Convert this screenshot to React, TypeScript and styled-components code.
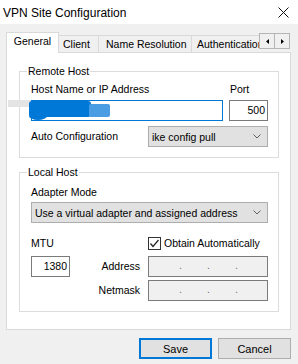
import React from 'react'
import styled, { createGlobalStyle } from 'styled-components'

const GlobalStyle = createGlobalStyle`
  * { box-sizing: border-box; }
  html, body { margin: 0; padding: 0; background: #f0f0f0; }
  body { font-family: 'Liberation Sans', Arial, sans-serif; font-size: 10.5px; color: #000; }
`

const tabs = ['General', 'Client', 'Name Resolution', 'Authentication']
const tabWidths = [53, 40, 93, 90]

const Chevron = () => (
  <svg width="8" height="5" viewBox="0 0 8 5">
    <polyline points="0.5,0.5 4,4 7.5,0.5" fill="none" stroke="#606060" strokeWidth="1" />
  </svg>
)

const App: React.FC = () => {
  return (
    <Window>
      <GlobalStyle />
      <TitleBar>
        <Title>VPN Site Configuration</Title>
        <svg width="11" height="11" viewBox="0 0 11 11">
          <path d="M0.5 0.5 L10.5 10.5 M10.5 0.5 L0.5 10.5" stroke="#111" strokeWidth="1" />
        </svg>
      </TitleBar>
      <Body>
        <TabStrip>
          <TabList>
            {tabs.map((t, i) => (
              <Tab key={t} $active={i === 0} $width={tabWidths[i]}>
                {t}
              </Tab>
            ))}
          </TabList>
          <Arrows>
            <ArrowBtn>
              <svg width="3" height="5" viewBox="0 0 3 5">
                <polygon points="3,0 3,5 0,2.5" fill="#000" />
              </svg>
            </ArrowBtn>
            <ArrowBtn>
              <svg width="3" height="5" viewBox="0 0 3 5">
                <polygon points="0,0 0,5 3,2.5" fill="#000" />
              </svg>
            </ArrowBtn>
          </Arrows>
        </TabStrip>
        <Panel>
          <Group $pt={11}>
            <Legend>Remote Host</Legend>
            <HostRow>
              <Column>
                <Label>Host Name or IP Address</Label>
                <TextBox $focused />
              </Column>
              <Column $width={39}>
                <Label $indent={1}>Port</Label>
                <TextBox>500</TextBox>
              </Column>
            </HostRow>
            <ConfigRow>
              <Label>Auto Configuration</Label>
              <Combo $width={120}>
                <span>ike config pull</span>
                <Chevron />
              </Combo>
            </ConfigRow>
            <Redaction width="104" height="21" viewBox="0 0 104 21">
              <rect x="0" y="0" width="23" height="7" fill="#e4e4e4" />
              <rect x="21" y="1" width="62" height="16" rx="3" fill="#0078d7" />
              <ellipse cx="30" cy="16" rx="9" ry="4" fill="#0078d7" />
              <rect x="81" y="4" width="21" height="13" rx="2" fill="#4a9de2" />
            </Redaction>
          </Group>
          <Group $pt={13}>
            <Legend>Local Host</Legend>
            <Label>Adapter Mode</Label>
            <Combo $top={3}>
              <span>Use a virtual adapter and assigned address</span>
              <Chevron />
            </Combo>
            <AddrGrid>
              <Label>MTU</Label>
              <span />
              <CheckRow>
                <CheckBox>
                  <svg width="11" height="11" viewBox="0 0 11 11">
                    <polyline points="1.5,5.5 4,8.5 9.5,2" fill="none" stroke="#222" strokeWidth="1.2" />
                  </svg>
                </CheckBox>
                <span>Obtain Automatically</span>
              </CheckRow>
              <TextBox>1380</TextBox>
              <FieldLabel>Address</FieldLabel>
              <IpField>
                <Dot>.</Dot>
                <Dot>.</Dot>
                <Dot>.</Dot>
              </IpField>
              <span />
              <FieldLabel>Netmask</FieldLabel>
              <IpField>
                <Dot>.</Dot>
                <Dot>.</Dot>
                <Dot>.</Dot>
              </IpField>
            </AddrGrid>
          </Group>
        </Panel>
        <Footer>
          <Button $primary>Save</Button>
          <Button>Cancel</Button>
        </Footer>
      </Body>
    </Window>
  )
}

export default App

const Window = styled.div`
  width: 298px;
  height: 364px;
  background: #f0f0f0;
  display: flex;
  flex-direction: column;
  overflow: hidden;
`

const TitleBar = styled.div`
  height: 24px;
  background: #fff;
  display: flex;
  align-items: center;
  justify-content: space-between;
  padding: 1px 9px 0 3px;
`

const Title = styled.div`
  font-size: 12px;
  color: #000;
`

const Body = styled.div`
  padding: 8px 7px 0 6px;
  display: flex;
  flex-direction: column;
`

const TabStrip = styled.div`
  display: flex;
  height: 21px;
  margin-bottom: -1px;
  position: relative;
  z-index: 1;
`

const TabList = styled.div`
  width: 253px;
  display: flex;
  align-items: flex-end;
  overflow: hidden;
`

const Tab = styled.div<{ $active?: boolean; $width: number }>`
  flex: 0 0 ${(p) => p.$width}px;
  height: ${(p) => (p.$active ? 21 : 17)}px;
  margin-bottom: ${(p) => (p.$active ? 0 : 1)}px;
  background: ${(p) => (p.$active ? '#fff' : '#f0f0f0')};
  border: 1px solid #d9d9d9;
  border-bottom: none;
  border-left: ${(p) => (p.$active ? '1px solid #d9d9d9' : 'none')};
  padding: ${(p) => (p.$active ? '2px 0 0 0' : '2px 0 0 5px')};
  text-align: ${(p) => (p.$active ? 'center' : 'left')};
  white-space: nowrap;
  line-height: 13px;
  &:nth-child(2) { padding-left: 4px; }
  &:nth-child(3) { padding-left: 7px; }
`

const Arrows = styled.div`
  display: flex;
  margin-top: 1px;
  height: 16px;
`

const ArrowBtn = styled.div`
  width: 16px;
  height: 16px;
  background: #f0f0f0;
  border: 1px solid #b5b5b5;
  & + & { border-left: none; width: 15px; }
  display: flex;
  align-items: center;
  justify-content: center;
`

const Panel = styled.div`
  width: 285px;
  height: 278px;
  background: #fff;
  border: 1px solid #d9d9d9;
  padding: 18px 11px 0 12px;
  display: flex;
  flex-direction: column;
  gap: 14px;
`

const Group = styled.div<{ $pt: number }>`
  position: relative;
  border: 1px solid #dcdcdc;
  padding: ${(p) => p.$pt}px 10px 10px 11px;
  display: flex;
  flex-direction: column;
`

const Legend = styled.span`
  position: absolute;
  top: -7px;
  left: 7px;
  padding: 0 1px;
  background: #fff;
  line-height: 13px;
`

const Label = styled.div<{ $indent?: number }>`
  line-height: 13px;
  white-space: nowrap;
  padding-left: ${(p) => p.$indent || 0}px;
`

const HostRow = styled.div`
  display: flex;
  gap: 6px;
`

const Column = styled.div<{ $width?: number }>`
  display: flex;
  flex-direction: column;
  gap: 4px;
  flex: ${(p) => (p.$width ? `0 0 ${p.$width}px` : '1')};
`

const TextBox = styled.div<{ $focused?: boolean }>`
  height: 21px;
  border: 1px solid ${(p) => (p.$focused ? '#0078d7' : '#7a7a7a')};
  background: #fff;
  text-align: right;
  padding: 3px 2px 0 0;
  line-height: 13px;
`

const ConfigRow = styled.div`
  margin-top: 5px;
  display: flex;
  align-items: center;
  justify-content: space-between;
`

const Combo = styled.div<{ $width?: number; $top?: number }>`
  height: 21px;
  width: ${(p) => (p.$width ? `${p.$width}px` : 'auto')};
  margin-top: ${(p) => p.$top || 0}px;
  background: #e1e1e1;
  border: 1px solid #adadad;
  display: flex;
  align-items: center;
  justify-content: space-between;
  padding: 0 6px 0 3px;
  white-space: nowrap;
`

const Redaction = styled.svg`
  position: absolute;
  left: -12px;
  top: 28px;
`

const AddrGrid = styled.div`
  margin-top: 14px;
  display: grid;
  grid-template-columns: 39px 62px 120px;
  grid-template-rows: 13px 27px 24px;
  column-gap: 8px;
  align-items: start;
  & > :nth-child(n + 4) { margin-top: 6px; }
  & > :nth-child(n + 7) { margin-top: 3px; }
`

const CheckRow = styled.div`
  display: flex;
  align-items: center;
  gap: 3px;
  line-height: 13px;
  white-space: nowrap;
`

const CheckBox = styled.div`
  width: 13px;
  height: 13px;
  border: 1px solid #333;
  background: #fff;
  display: flex;
  align-items: center;
  justify-content: center;
`

const FieldLabel = styled.div`
  height: 21px;
  text-align: right;
  line-height: 21px;
  white-space: nowrap;
`

const IpField = styled.div`
  height: 21px;
  border: 1px solid #7a7a7a;
  background: #f0f0f0;
  display: flex;
  padding: 2px 0 0 30px;
  color: #6d6d6d;
  line-height: 13px;
`

const Dot = styled.span`
  width: 28px;
`

const Footer = styled.div`
  margin-top: 8px;
  display: flex;
  justify-content: flex-end;
  gap: 6px;
`

const Button = styled.div<{ $primary?: boolean }>`
  width: 73px;
  height: 21px;
  background: #e1e1e1;
  border: ${(p) => (p.$primary ? '2px solid #0078d7' : '1px solid #adadad')};
  display: flex;
  align-items: center;
  justify-content: center;
  font-size: 11px;
`
